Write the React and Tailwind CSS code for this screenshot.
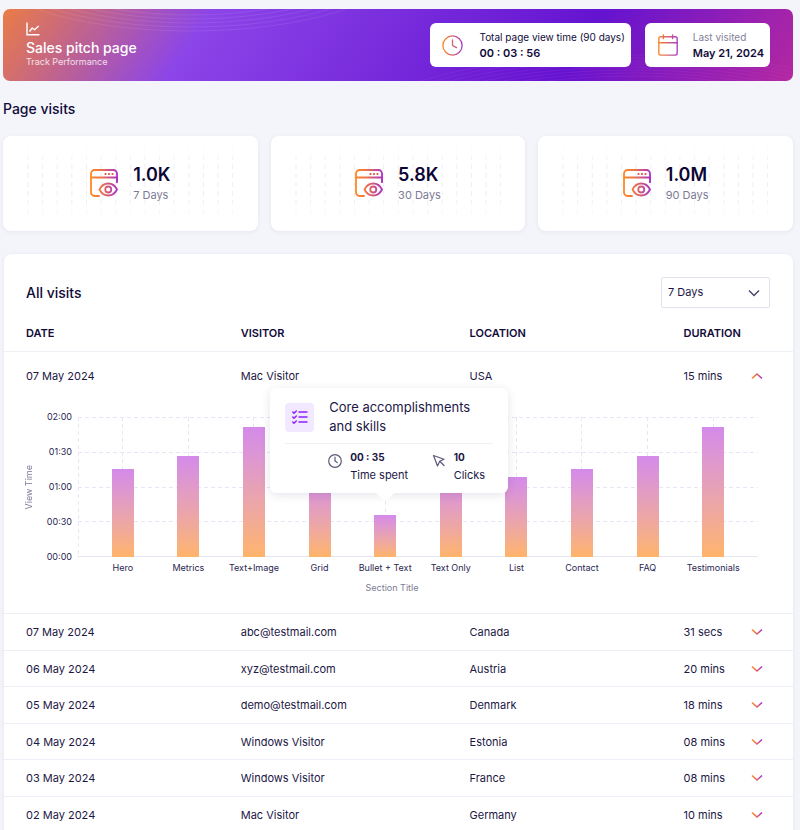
import React, { useState } from "react";

const stats = [
  { value: "1.0K", label: "7 Days" },
  { value: "5.8K", label: "30 Days" },
  { value: "1.0M", label: "90 Days" },
];

const bars = [
  { name: "Hero", height: 88 },
  { name: "Metrics", height: 101 },
  { name: "Text+Image", height: 130 },
  { name: "Grid", height: 80 },
  { name: "Bullet + Text", height: 42, active: true },
  { name: "Text Only", height: 80 },
  { name: "List", height: 80 },
  { name: "Contact", height: 88 },
  { name: "FAQ", height: 101 },
  { name: "Testimonials", height: 130 },
];

const ticks = ["02:00", "01:30", "01:00", "00:30", "00:00"];

const visits = [
  ["07 May 2024", "abc@testmail.com", "Canada", "31 secs"],
  ["06 May 2024", "xyz@testmail.com", "Austria", "20 mins"],
  ["05 May 2024", "demo@testmail.com", "Denmark", "18 mins"],
  ["04 May 2024", "Windows Visitor", "Estonia", "08 mins"],
  ["03 May 2024", "Windows Visitor", "France", "08 mins"],
  ["02 May 2024", "Mac Visitor", "Germany", "10 mins"],
];

function Gradients() {
  return (
    <svg className="absolute size-0" aria-hidden="true">
      <defs>
        <linearGradient id="warm24" gradientUnits="userSpaceOnUse" x1="1" y1="0" x2="23" y2="0">
          <stop offset="0" stopColor="#ff8a1f" />
          <stop offset="1" stopColor="#a93bc9" />
        </linearGradient>
        <linearGradient id="warm28" gradientUnits="userSpaceOnUse" x1="0" y1="0" x2="28" y2="0">
          <stop offset="0" stopColor="#ff8a1f" />
          <stop offset="0.4" stopColor="#ee7448" />
          <stop offset="1" stopColor="#a930cc" />
        </linearGradient>
        <linearGradient id="warm12" gradientUnits="userSpaceOnUse" x1="0" y1="0" x2="12" y2="0">
          <stop offset="0.1" stopColor="#ff8a1f" />
          <stop offset="0.5" stopColor="#e2605c" />
          <stop offset="0.9" stopColor="#a32fd0" />
        </linearGradient>
      </defs>
    </svg>
  );
}

function Chevron({ up }) {
  return (
    <svg className="h-2 w-3" viewBox="0 0 12 8" fill="none" stroke="url(#warm12)" strokeWidth="1.6" aria-hidden="true">
      <path d={up ? "M1 6.5 6 2l5 4.5" : "M1 1.5 6 6l5-4.5"} />
    </svg>
  );
}

function PageViewIcon() {
  return (
    <svg className="size-7" viewBox="0 0 28 28" fill="none" stroke="url(#warm28)" strokeWidth="1.8" strokeLinecap="round" aria-hidden="true">
      <path d="M9 27H4.5A3.5 3.5 0 0 1 1 23.500V4.500A3.500 3.500 0 0 1 4.500 1h19A3.500 3.500 0 0 1 27 4.500V13" />
      <path d="M1 8.500h26M27 8.500V13" />
      <path d="M9.500 20.500c4-8 13.500-8 17.500 0-4 8-13.500 8-17.500 0z" strokeLinejoin="round" />
      <circle cx="18.250" cy="20.500" r="3" />
      <g fill="#d4503f" stroke="none">
        <circle cx="15.500" cy="5" r="1.100" />
        <circle cx="19" cy="5" r="1.100" />
        <circle cx="22.500" cy="5" r="1.100" />
      </g>
    </svg>
  );
}

function DashedBackdrop() {
  return (
    <svg
      className="absolute inset-x-6 inset-y-2 h-[78px] w-[calc(100%-48px)] mask-[linear-gradient(transparent,black_30%,black_70%,transparent)]"
      viewBox="0 0 206 78"
      preserveAspectRatio="none"
      aria-hidden="true"
    >
      <g stroke="#eeeef6" strokeWidth="1" strokeDasharray="5 4">
        {Array.from({ length: 15 }, (_, i) => (
          <line key={i} x1={1 + i * 14.57} x2={1 + i * 14.57} y1="2" y2="78" />
        ))}
      </g>
    </svg>
  );
}

function Banner() {
  return (
    <header className="relative flex min-h-[72px] items-center justify-between overflow-hidden rounded-[7px] bg-[linear-gradient(123deg,#ea7c45_0%,#8c45e8_25%,#6413d0_72%,#b428a0_100%)] px-[23px]">
      <svg className="absolute top-0 left-0 h-[72px] w-[400px]" fill="none" stroke="#ffffff" strokeOpacity="0.09" strokeWidth="1" aria-hidden="true">
        {[0, 1, 2, 3, 4].map((i) => (
          <ellipse key={i} cx="188" cy={-46 - i * 4} rx={210 - i * 6} ry="68" />
        ))}
      </svg>
      <svg className="absolute right-0 bottom-0 h-[72px] w-[400px]" fill="none" stroke="#e04fe0" strokeOpacity="0.14" strokeWidth="1" aria-hidden="true">
        {[0, 1, 2, 3, 4, 5, 6, 7].map((i) => (
          <ellipse key={i} cx="240" cy={108 + i * 3} rx={260 - i * 6} ry="62" />
        ))}
      </svg>
      <div className="relative text-white">
        <svg className="size-3.5" viewBox="0 0 14 14" fill="none" stroke="currentColor" strokeWidth="1.4" aria-hidden="true">
          <path d="M1 0.500V12.700h12.500" />
          <path d="M3.500 9.500 6.200 6l2.300 1.800L12.700 4" strokeLinejoin="round" />
        </svg>
        <h1 className="mt-1 text-[14px] leading-4 font-medium">Sales pitch page</h1>
        <p className="text-[9px] leading-3 text-white/80">Track Performance</p>
      </div>
      <div className="relative flex gap-3.5">
        <div className="flex h-11 items-center gap-4 rounded-md bg-white pr-1.5 pl-3">
          <svg className="size-[21px]" viewBox="0 0 24 24" fill="none" stroke="url(#warm24)" strokeWidth="1.5" strokeLinecap="round" strokeLinejoin="round" aria-hidden="true">
            <circle cx="12" cy="12" r="11" />
            <path d="M12 5.500V12l4.500 2.500" />
          </svg>
          <div className="text-[#110b3a]">
            <p className="text-[10px] leading-4">Total page view time (90 days)</p>
            <p className="text-[11px] leading-4 font-semibold">00 : 03 : 56</p>
          </div>
        </div>
        <div className="flex h-11 items-center gap-3.5 rounded-md bg-white pr-1.5 pl-3">
          <svg className="size-[22px]" viewBox="0 0 24 24" fill="none" stroke="url(#warm24)" strokeWidth="1.5" strokeLinecap="round" strokeLinejoin="round" aria-hidden="true">
            <rect x="2" y="3" width="20" height="20" rx="2" />
            <path d="M2 9.500h20M7 1v4M17 1v4" />
          </svg>
          <div className="text-[#110b3a]">
            <p className="text-[10px] leading-4 text-[#827f99]">Last visited</p>
            <p className="text-[11px] leading-4 font-semibold">May 21, 2024</p>
          </div>
        </div>
      </div>
    </header>
  );
}

function Tooltip() {
  return (
    <div role="tooltip" className="absolute bottom-[64px] left-1/2 z-10 -ml-[115px] h-[105px] w-[238px] rounded-md bg-white px-[15px] pt-2.5 text-[#1c1745] shadow-[0_2px_10px_rgba(40,30,90,0.12)]">
      <div className="flex items-center gap-[15px] border-b border-[#f0f0f6] pb-[7px]">
        <span className="grid size-[29px] shrink-0 place-items-center rounded-sm bg-[#f2e8ff]">
          <svg className="h-[14px] w-4" viewBox="0 0 16 14" fill="none" stroke="#8a1fff" strokeWidth="1.400" strokeLinecap="round" strokeLinejoin="round" aria-hidden="true">
            <path d="M7 2h8M7 7h8M7 12h8" />
            <path d="m0.800 2 1.200 1.200L4.300 1M0.800 7l1.200 1.200L4.300 6M0.800 12l1.200 1.200L4.300 11" />
          </svg>
        </span>
        <p className="text-[13px] leading-[19px]">Core accomplishments and skills</p>
      </div>
      <div className="flex justify-between pt-1 pr-2 pl-[43px] text-[11px] leading-[18px]">
        <div className="flex gap-2">
          <svg className="mt-1.5 size-3.5" viewBox="0 0 14 14" fill="none" stroke="#5b5879" strokeWidth="1.200" strokeLinecap="round" aria-hidden="true">
            <circle cx="7" cy="7" r="6.300" />
            <path d="M7 3.200V7l2.200 1.600" />
          </svg>
          <div>
            <p className="text-[10px] leading-[18px] font-bold">00 : 35</p>
            <p>Time spent</p>
          </div>
        </div>
        <div className="flex gap-2">
          <svg className="mt-1.5 size-3.5" viewBox="0 0 14 14" fill="none" stroke="#5b5879" strokeWidth="1.200" strokeLinejoin="round" aria-hidden="true">
            <path d="M1.500 1.500 12 5.300 7.700 7.300 5.500 12z" />
            <path d="m8 7.500 4 4" strokeLinecap="round" />
          </svg>
          <div>
            <p className="text-[10px] leading-[18px] font-bold">10</p>
            <p>Clicks</p>
          </div>
        </div>
      </div>
      <svg className="absolute top-full left-[106px] h-2 w-[18px]" viewBox="0 0 18 8" aria-hidden="true">
        <path d="M0 0h18L9 8z" fill="#ffffff" />
      </svg>
    </div>
  );
}

function Chart() {
  return (
    <div className="pt-6 pr-[35px] pb-[17px] pl-4 text-[#2a2550]">
      <div className="flex">
        <div className="flex w-[18px] shrink-0 items-center justify-center">
          <span className="rotate-180 text-[9px] leading-3 text-[#7d7a95] [writing-mode:vertical-rl]">View Time</span>
        </div>
        <div className="-my-1.5 flex w-10 shrink-0 flex-col justify-between pr-1.5 text-right text-[9px] leading-3">
          {ticks.map((t) => (
            <span key={t}>{t}</span>
          ))}
        </div>
        <div className="relative h-[140px] flex-1">
          <div className="absolute inset-0 flex flex-col border-b border-[#e3e5f1]">
            {[0, 1, 2, 3].map((i) => (
              <div key={i} className="flex-1 bg-[repeating-linear-gradient(90deg,#e8e6f5_0_4px,transparent_4px_7px)] bg-[length:100%_1px] bg-no-repeat" />
            ))}
          </div>
          <div className="absolute inset-y-0 left-0 w-px bg-[repeating-linear-gradient(180deg,#e8e6f5_0_4px,transparent_4px_7px)]" />
          <div className="relative flex h-full px-3">
            {bars.map((b) => (
              <div
                key={b.name}
                className="relative flex flex-1 items-end justify-center bg-[repeating-linear-gradient(180deg,#e8e6f5_0_4px,transparent_4px_7px)] bg-[length:1px_100%] bg-center bg-no-repeat"
              >
                <div className="w-[22px] bg-linear-to-b from-[#d48aea] to-[#ffb469]" style={{ height: b.height }} />
                {b.active && <Tooltip />}
              </div>
            ))}
          </div>
        </div>
      </div>
      <div className="flex pt-[3px] pr-3 pl-[70px] text-[9px] leading-4">
        {bars.map((b) => (
          <span key={b.name} className="flex flex-1 justify-center whitespace-nowrap">
            {b.name}
          </span>
        ))}
      </div>
      <p className="pt-1 pl-1.5 text-center text-[9px] leading-4 text-[#7d7a95]">Section Title</p>
    </div>
  );
}

export default function App() {
  const [range, setRange] = useState("7 Days");
  const [open, setOpen] = useState(true);

  return (
    <main className="min-h-screen bg-[#f4f5fa] pt-[9px] pr-[7px] pl-[3px] font-['Inter','Liberation_Sans',sans-serif] text-[#1c1745]">
      <Gradients />
      <Banner />

      <h2 className="mt-[18px] text-[14px] leading-5 font-medium text-[#110b3a]">Page visits</h2>

      <section className="mt-[17px] grid grid-cols-3 gap-[13px]">
        {stats.map((s) => (
          <div key={s.label} className="relative flex h-[95px] items-center justify-center gap-[15px] rounded-lg bg-white pb-0.5 shadow-[0_1px_4px_rgba(60,60,120,0.08)]">
            <DashedBackdrop />
            <div className="relative">
              <PageViewIcon />
            </div>
            <div className="relative">
              <p className="text-[18px] leading-6 font-semibold text-[#0b0633]">{s.value}</p>
              <p className="text-[11px] leading-4 text-[#7d7a95]">{s.label}</p>
            </div>
          </div>
        ))}
      </section>

      <section className="mt-[23px] ml-px rounded-t-lg bg-white shadow-[0_1px_4px_rgba(60,60,120,0.08)]">
        <div className="flex items-center justify-between pt-[23px] pr-[23px] pl-[22px]">
          <h2 className="text-[14px] leading-5 font-medium text-[#110b3a]">All visits</h2>
          <div className="relative">
            <select
              aria-label="Period"
              value={range}
              onChange={(e) => setRange(e.target.value)}
              className="h-[31px] w-[109px] appearance-none rounded-xs border border-[#e2e2ee] bg-white px-1.5 text-[11px]"
            >
              <option>7 Days</option>
              <option>30 Days</option>
              <option>90 Days</option>
            </select>
            <svg className="pointer-events-none absolute top-3 right-2.5 h-2 w-3" viewBox="0 0 12 8" fill="none" stroke="#4a4668" strokeWidth="1.500" aria-hidden="true">
              <path d="M1 1.500 6 6.500l5-5" />
            </svg>
          </div>
        </div>

        <table className="mt-[7px] w-full table-fixed text-left text-[11px] leading-4">
          <colgroup>
            <col className="w-[30%]" />
            <col className="w-[29%]" />
            <col className="w-[27%]" />
            <col className="w-[8%]" />
            <col className="w-[6%]" />
          </colgroup>
          <thead>
            <tr className="h-9 border-b border-[#f0f1f7] text-[#110b3a]">
              <th className="pl-[22px] font-semibold">DATE</th>
              <th className="font-semibold">VISITOR</th>
              <th className="font-semibold">LOCATION</th>
              <th colSpan={2} className="pl-px font-semibold">DURATION</th>
            </tr>
          </thead>
          <tbody>
            <tr className="h-[42px]">
              <td className="pt-2 pl-[22px]">07 May 2024</td>
              <td className="pt-2">Mac Visitor</td>
              <td className="pt-2">USA</td>
              <td className="pt-2 pl-px whitespace-nowrap">15 mins</td>
              <td className="pt-2 pl-px">
                <button type="button" aria-label="Toggle details" aria-expanded={open} onClick={() => setOpen(!open)} className="flex h-4 items-center px-1">
                  <Chevron up={open} />
                </button>
              </td>
            </tr>
            {open && (
              <tr>
                <td colSpan={5}>
                  <Chart />
                </td>
              </tr>
            )}
          </tbody>
          <tbody>
            {visits.map((row) => (
              <tr key={row[0] + row[1]} className="h-9 border-t border-[#eeeff6] odd:h-[37px]">
                <td className="pl-[22px]">{row[0]}</td>
                <td>{row[1]}</td>
                <td>{row[2]}</td>
                <td className="pl-px whitespace-nowrap">{row[3]}</td>
                <td className="pl-px">
                  <button type="button" aria-label="Toggle details" aria-expanded="false" className="flex h-4 items-center px-1">
                    <Chevron />
                  </button>
                </td>
              </tr>
            ))}
          </tbody>
        </table>
      </section>
    </main>
  );
}
